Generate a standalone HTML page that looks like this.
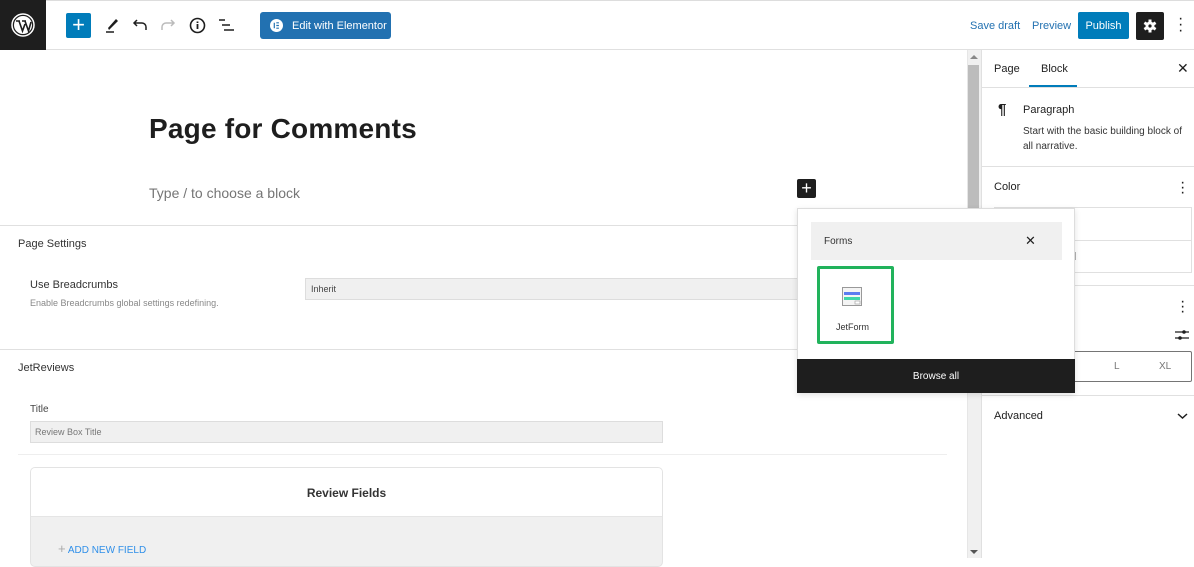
<!DOCTYPE html>
<html><head><style>
*{box-sizing:border-box;margin:0;padding:0}
body{width:1194px;height:558px;overflow:hidden;background:#fff;font-family:"Liberation Sans",sans-serif;position:relative;color:#1e1e1e}
.a{position:absolute}
.t{font-size:12px}
</style></head><body>
<!-- top bar -->
<div class="a" style="left:0;top:0;width:1194px;height:50px;border-bottom:1px solid #e0e0e0;border-top:1px solid #ddd"></div>
<div class="a" style="left:0;top:0;width:46px;height:50px;background:#1e1e1e"></div>
<svg class="a" style="left:11px;top:13px" width="24" height="24" viewBox="0 0 24 24"><circle cx="12" cy="12" r="11" fill="none" stroke="#fff" stroke-width="1.5"/><circle cx="12" cy="12" r="9" fill="#fff"/><path d="M5 8h4M8 8l3.5 10L14 11M11 8h4M14 8l3.5 10L20 9" stroke="#1e1e1e" stroke-width="1.6" fill="none"/></svg>
<div class="a" style="left:66px;top:13px;width:25px;height:25px;background:#007cba;border-radius:2px;color:#fff;font-size:22px;line-height:24px;text-align:center">+</div>
<svg class="a" style="left:104px;top:16px" width="18" height="18" viewBox="0 0 18 18"><path d="M4 12L12 3l2 2-9 9z" fill="#1e1e1e"/><path d="M2 16h8" stroke="#1e1e1e" stroke-width="1.5"/></svg>
<svg class="a" style="left:132px;top:17px" width="16" height="16" viewBox="0 0 16 16"><path d="M5 3L2 6l3 3M2 6h8a4 4 0 014 4v3" stroke="#1e1e1e" stroke-width="1.5" fill="none"/></svg>
<svg class="a" style="left:160px;top:17px" width="16" height="16" viewBox="0 0 16 16"><path d="M11 3l3 3-3 3M14 6H6a4 4 0 00-4 4v3" stroke="#bbb" stroke-width="1.5" fill="none"/></svg>
<svg class="a" style="left:189px;top:17px" width="17" height="17" viewBox="0 0 17 17"><circle cx="8.5" cy="8.5" r="7" stroke="#1e1e1e" stroke-width="1.6" fill="none"/><path d="M8.5 7v5M8.5 4.5v1.5" stroke="#1e1e1e" stroke-width="1.8"/></svg>
<svg class="a" style="left:218px;top:17px" width="17" height="16" viewBox="0 0 17 16"><path d="M1 3h6M4 8h8M6 13h10" stroke="#1e1e1e" stroke-width="1.6"/></svg>
<div class="a" style="left:260px;top:12px;width:131px;height:27px;background:#2271b1;border-radius:3px;color:#fff;font-size:11px;line-height:28px;padding-left:32px">Edit with Elementor</div>
<svg class="a" style="left:270px;top:19px" width="13" height="13" viewBox="0 0 13 13"><circle cx="6.5" cy="6.5" r="6.5" fill="#fff"/><path d="M4.3 3.8v5.4M6.3 3.8h2.6M6.3 6.5h2.6M6.3 9.2h2.6" stroke="#2271b1" stroke-width="1.2"/></svg>
<div class="a t" style="left:970px;top:20px;color:#2271b1;font-size:11px">Save draft</div>
<div class="a t" style="left:1032px;top:20px;color:#2271b1;font-size:11px">Preview</div>
<div class="a" style="left:1078px;top:12px;width:51px;height:27px;background:#007cba;border-radius:2px;color:#fff;font-size:11px;line-height:28px;text-align:center">Publish</div>
<div class="a" style="left:1136px;top:12px;width:28px;height:28px;background:#1e1e1e;border-radius:2px"></div>
<svg class="a" style="left:1143px;top:19px" width="14" height="14" viewBox="0 0 14 14"><g fill="#fff"><rect x="5.5" y="0.5" width="3" height="13"/><rect x="5.5" y="0.5" width="3" height="13" transform="rotate(60 7 7)"/><rect x="5.5" y="0.5" width="3" height="13" transform="rotate(120 7 7)"/><circle cx="7" cy="7" r="4.5"/></g><circle cx="7" cy="7" r="1.6" fill="#1e1e1e"/></svg>
<div class="a" style="left:1178px;top:16px;font-size:16px;line-height:6px;width:4px">·<br>·<br>·</div>

<!-- editor -->
<div class="a" style="left:149px;top:113px;font-size:28px;font-weight:bold;letter-spacing:0.2px">Page for Comments</div>
<div class="a" style="left:149px;top:185px;font-size:14px;color:#757575">Type / to choose a block</div>
<div class="a" style="left:797px;top:179px;width:19px;height:19px;background:#1e1e1e;border-radius:2px;color:#fff;text-align:center;font-size:18px;line-height:18px">+</div>

<div class="a" style="left:0;top:225px;width:967px;height:1px;background:#e0e0e0"></div>
<div class="a t" style="left:18px;top:238px;font-size:11px;color:#333">Page Settings</div>
<div class="a t" style="left:30px;top:279px;font-size:11px;color:#333">Use Breadcrumbs</div>
<div class="a" style="left:30px;top:298px;font-size:9px;color:#888">Enable Breadcrumbs global settings redefining.</div>
<div class="a" style="left:305px;top:278px;width:500px;height:22px;background:#f0f0f0;border:1px solid #ddd;font-size:9px;line-height:20px;padding-left:5px;color:#444">Inherit</div>
<div class="a" style="left:0;top:349px;width:967px;height:1px;background:#e0e0e0"></div>
<div class="a t" style="left:18px;top:362px;font-size:11px;color:#333">JetReviews</div>
<div class="a" style="left:30px;top:404px;font-size:10px;color:#444">Title</div>
<div class="a" style="left:30px;top:421px;width:633px;height:22px;background:#f0f0f0;border:1px solid #ddd;font-size:9px;line-height:20px;padding-left:4px;color:#777">Review Box Title</div>
<div class="a" style="left:18px;top:454px;width:929px;height:1px;background:#eee"></div>
<div class="a" style="left:30px;top:467px;width:633px;height:100px;border:1px solid #e3e3e3;border-radius:5px;background:#f0f0f0;overflow:hidden">
 <div style="height:49px;background:#fff;border-bottom:1px solid #e5e5e5;text-align:center;font-size:12px;font-weight:bold;line-height:50px;color:#333">Review Fields</div>
 <div style="position:absolute;left:27px;top:73px;font-size:10px;color:#2f8fe9"><span style="color:#aaa;font-size:13px">+</span> ADD NEW FIELD</div>
</div>

<!-- scrollbar -->
<div class="a" style="left:967px;top:50px;width:14px;height:508px;background:#f0f0f0;border-left:1px solid #e6e6e6"></div>
<div class="a" style="left:968px;top:65px;width:11px;height:150px;background:#bcbcbc"></div>
<div class="a" style="left:970px;top:55px;border:4px solid transparent;border-bottom-color:#888;border-top:none"></div>
<div class="a" style="left:970px;top:550px;border:4px solid transparent;border-top-color:#555;border-bottom:none"></div>

<!-- sidebar -->
<div class="a" style="left:981px;top:50px;width:213px;height:508px;border-left:1px solid #e0e0e0"></div>
<div class="a t" style="left:994px;top:63px;font-size:11px">Page</div>
<div class="a t" style="left:1041px;top:63px;font-size:11px">Block</div>
<div class="a" style="left:1029px;top:85px;width:48px;height:2px;background:#007cba"></div>
<div class="a" style="left:1177px;top:60px;font-size:14px">✕</div>
<div class="a" style="left:982px;top:87px;width:212px;height:1px;background:#e0e0e0"></div>
<div class="a" style="left:998px;top:101px;font-size:15px;font-weight:bold">¶</div>
<div class="a" style="left:1023px;top:104px;font-size:11px">Paragraph</div>
<div class="a" style="left:1023px;top:124px;font-size:10px;line-height:15px;color:#333;width:171px">Start with the basic building block of all narrative.</div>
<div class="a" style="left:982px;top:166px;width:212px;height:1px;background:#e0e0e0"></div>
<div class="a t" style="left:994px;top:181px;font-size:11px">Color</div>
<div class="a" style="left:1180px;top:180px;font-size:16px;line-height:5px">·<br>·<br>·</div>
<div class="a" style="left:994px;top:207px;width:198px;height:66px;border:1px solid #e0e0e0"></div>
<div class="a" style="left:994px;top:240px;width:198px;height:1px;background:#e0e0e0"></div>
<div class="a" style="left:1070px;top:251px;font-size:11px;color:#333">d</div>
<div class="a" style="left:982px;top:285px;width:212px;height:1px;background:#e0e0e0"></div>
<div class="a" style="left:1180px;top:299px;font-size:16px;line-height:5px">·<br>·<br>·</div>
<svg class="a" style="left:1175px;top:328px" width="14" height="14" viewBox="0 0 14 14"><path d="M0 4h14M0 10h14" stroke="#1e1e1e" stroke-width="1.3"/><circle cx="9" cy="4" r="1.8" fill="#1e1e1e"/><circle cx="5" cy="10" r="1.8" fill="#1e1e1e"/></svg>
<div class="a" style="left:1060px;top:351px;width:132px;height:31px;border:1px solid #757575;border-radius:2px"></div>
<div class="a" style="left:1114px;top:361px;font-size:10px;color:#777">L</div>
<div class="a" style="left:1159px;top:361px;font-size:10px;color:#777">XL</div>
<div class="a" style="left:982px;top:395px;width:212px;height:1px;background:#e0e0e0"></div>
<div class="a t" style="left:994px;top:410px;font-size:11px">Advanced</div>
<svg class="a" style="left:1177px;top:412px" width="11" height="8" viewBox="0 0 11 8"><path d="M1 2l4.5 4L10 2" stroke="#1e1e1e" stroke-width="1.5" fill="none"/></svg>

<!-- popup -->
<div class="a" style="left:797px;top:208px;width:278px;height:185px;background:#fff;border:1px solid #ddd;box-shadow:0 2px 6px rgba(0,0,0,.12)"></div>
<div class="a" style="left:811px;top:222px;width:251px;height:38px;background:#f0f0f0"></div>
<div class="a" style="left:824px;top:236px;font-size:10px;color:#333">Forms</div>
<div class="a" style="left:1025px;top:233px;font-size:13px;color:#1e1e1e">✕</div>
<div class="a" style="left:817px;top:266px;width:77px;height:78px;border:3px solid #21b35c;border-radius:2px"></div>
<svg class="a" style="left:842px;top:287px" width="20" height="19" viewBox="0 0 20 19"><rect x="0.5" y="0.5" width="19" height="18" fill="#f4f4f4" stroke="#999"/><rect x="2" y="5" width="16" height="3" fill="#5b7cf0"/><rect x="2" y="10" width="16" height="3" fill="#3fd6a8"/><rect x="13" y="14" width="5" height="3" fill="#fff" stroke="#999" stroke-width=".6"/></svg>
<div class="a" style="left:836px;top:322px;font-size:9px;color:#333">JetForm</div>
<div class="a" style="left:797px;top:359px;width:278px;height:34px;background:#1e1e1e;color:#fff;font-size:10px;text-align:center;line-height:36px">Browse all</div>
</body></html>
